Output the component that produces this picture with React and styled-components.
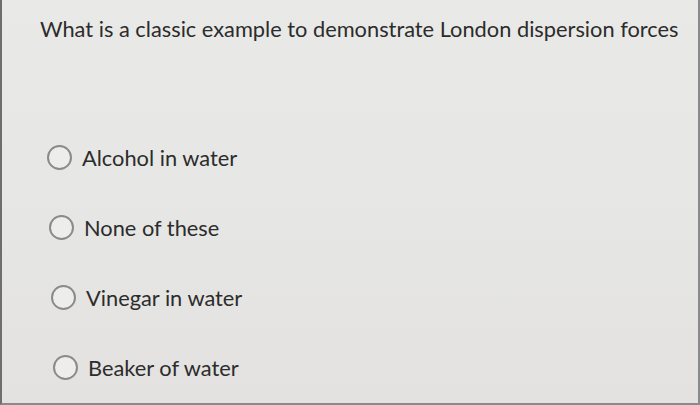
import React from 'react';
import styled, { createGlobalStyle } from 'styled-components';

const Global = createGlobalStyle`
	html, body {
		margin: 0;
		padding: 0;
		background: #e4e4e2;
	}
	* {
		box-sizing: border-box;
	}
`;

const Frame = styled.div`
	width: 700px;
	height: 405px;
	overflow: hidden;
	background: linear-gradient(180deg, #e9e9e7 0%, #e6e6e4 55%, #e3e2e0 100%);
	border-left: 2px solid #6e6e6e;
	border-right: 2px solid #8a8a8a;
	border-bottom: 2px solid #8a8a8a;
	font-family: Lato, "Liberation Sans", sans-serif;
	color: #2c2c2c;
`;

const Question = styled.div`
	padding: 15px 0 0 38px;
	font-size: 21.8px;
	line-height: 28px;
	white-space: nowrap;
`;

const Options = styled.div`
	display: flex;
	flex-direction: column;
	gap: 42px;
	padding: 100px 0 0 45px;
`;

const Option = styled.label`
	display: flex;
	align-items: center;
	gap: 10px;
	height: 28px;
	padding-left: ${({ shift }) => shift}px;
	font-size: 21.8px;
`;

const Radio = styled.span`
	display: block;
	width: 25px;
	height: 25px;
	border-radius: 50%;
	border: 2px solid #8b8b8b;
	background: #ededeb;
	flex-shrink: 0;
`;

const OPTS = [
	{ label: 'Alcohol in water', shift: 0 },
	{ label: 'None of these', shift: 2 },
	{ label: 'Vinegar in water', shift: 4 },
	{ label: 'Beaker of water', shift: 6 },
];

const App = () => (
	<>
		<Global />
		<Frame>
			<Question>What is a classic example to demonstrate London dispersion forces</Question>
			<Options>
				{OPTS.map(({ label, shift }) => (
					<Option key={label} shift={shift}>
						<Radio />
						{label}
					</Option>
				))}
			</Options>
		</Frame>
	</>
);

export default App;
